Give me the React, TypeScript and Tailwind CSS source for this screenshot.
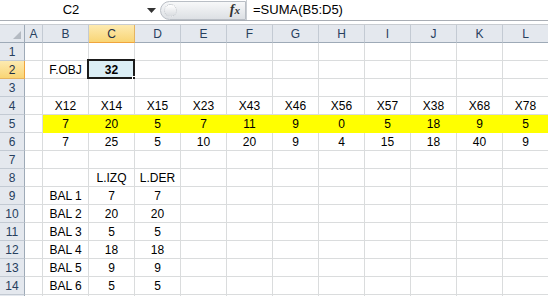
import React from 'react';

const COLS = ['A', 'B', 'C', 'D', 'E', 'F', 'G', 'H', 'I', 'J', 'K', 'L'];
const ROWS = Array.from({ length: 15 }, (_, i) => i + 1);

const vars = ['X12', 'X14', 'X15', 'X23', 'X43', 'X46', 'X56', 'X57', 'X38', 'X68', 'X78'];
const r5 = ['7', '20', '5', '7', '11', '9', '0', '5', '18', '9', '5'];
const r6 = ['7', '25', '5', '10', '20', '9', '4', '15', '18', '40', '9'];
const bal = ['7', '20', '5', '18', '9', '5'];

const CELLS: Record<string, string> = { B2: 'F.OBJ', C2: '32', C8: 'L.IZQ', D8: 'L.DER' };
vars.forEach((v, i) => {
  const c = COLS[i + 1];
  CELLS[`${c}4`] = v;
  CELLS[`${c}5`] = r5[i];
  CELLS[`${c}6`] = r6[i];
});
bal.forEach((v, i) => {
  CELLS[`B${i + 9}`] = `BAL ${i + 1}`;
  CELLS[`C${i + 9}`] = v;
  CELLS[`D${i + 9}`] = v;
});

function FormulaBar() {
  return (
    <div className="flex h-[21px] items-center border-b border-[#a9aeb5] bg-white">
      <div className="flex w-[158px] items-center">
        <div className="w-[142px] text-center text-[13px] text-black">C2</div>
        <svg width="9" height="5" viewBox="0 0 9 5" className="ml-[5px]">
          <path d="M0 0 H9 L4.5 5 Z" fill="#333" />
        </svg>
      </div>
      <div className="relative ml-[2px] flex h-[19px] w-[86px] items-center rounded-l-full border border-[#b9bec5] bg-gradient-to-b from-[#f7f8f9] to-[#dde0e4]">
        <div className="ml-[3px] h-[13px] w-[13px] rounded-full border border-dotted border-[#c2c6cb] bg-gradient-to-b from-[#ffffff] to-[#d9dce0]" />
        <span className="ml-auto mr-[5px] font-['Liberation_Serif'] text-[14px] font-bold italic leading-none text-[#333]">
          f<span className="text-[11px]">x</span>
        </span>
      </div>
      <div className="flex h-full flex-1 items-center border-l border-[#c9cdd2] pl-[6px] text-[13px] text-black">
        =SUMA(B5:D5)
      </div>
    </div>
  );
}

function ColHeader() {
  return (
    <div className="flex h-[18px]">
      <div className="relative w-[25px] shrink-0 border-b border-r border-[#9eaab7] bg-[#e4e8ee]">
        <svg width="8" height="8" viewBox="0 0 8 8" className="absolute bottom-[3px] right-[3px]">
          <path d="M8 0 V8 H0 Z" fill="#b4bac2" />
        </svg>
      </div>
      {COLS.map((c) => {
        const sel = c === 'C';
        return (
          <div
            key={c}
            className={`flex shrink-0 items-center justify-center border-b border-r text-[12px] ${
              c === 'A' ? 'w-[18px]' : 'w-[46px]'
            } ${
              sel
                ? 'border-b-[#f0a43c] border-r-[#e5b460] bg-gradient-to-b from-[#fdeab0] to-[#f9d574] text-[#1e2f44]'
                : 'border-b-[#9eaab7] border-r-[#c3cad3] bg-[#e4e8ee] text-[#27405e]'
            }`}
          >
            {c}
          </div>
        );
      })}
    </div>
  );
}

function Cell({ col, row }: { col: string; row: number }) {
  const key = `${col}${row}`;
  const v = CELLS[key];
  const yellow = row === 5 && col !== 'A';
  const active = key === 'C2';
  return (
    <div
      className={`relative flex h-[18px] shrink-0 items-center justify-center border-b border-r text-[12px] text-black ${
        col === 'A' ? 'w-[18px]' : 'w-[46px]'
      } ${yellow ? 'border-[#ffff00] bg-[#ffff00]' : active ? 'border-[#d8d8d8] bg-[#dbeef5]' : 'border-[#dadcdd] bg-white'}`}
    >
      <span className={active ? 'font-bold' : ''}>{v}</span>
      {active && (
        <>
          <div className="pointer-events-none absolute -left-[2px] -top-[2px] h-[20px] w-[48px] border-[2px] border-[#1b1b1b]" />
          <div className="absolute -bottom-[3px] -right-[3px] h-[5px] w-[5px] border border-white bg-[#1b1b1b]" />
        </>
      )}
    </div>
  );
}

export default function App() {
  return (
    <div className="h-[296px] w-[548px] overflow-hidden bg-white font-['Liberation_Sans',Arial,sans-serif]">
      <FormulaBar />
      <div className="h-[4px] border-b border-[#c8ccd1] bg-white" />
      <div className="w-[600px]">
        <ColHeader />
        {ROWS.map((r) => (
          <div key={r} className="flex">
            <div
              className={`flex h-[18px] w-[25px] shrink-0 items-center justify-center border-b border-r text-[12px] ${
                r === 2
                  ? 'border-b-[#e5b460] border-r-[#f0a43c] bg-gradient-to-b from-[#fdeab0] to-[#f9d574] text-[#1e2f44]'
                  : 'border-b-[#c3cad3] border-r-[#9eaab7] bg-[#e4e8ee] text-[#27405e]'
              }`}
            >
              {r < 15 ? r : ''}
            </div>
            {COLS.map((c) => (
              <Cell key={c} col={c} row={r} />
            ))}
          </div>
        ))}
      </div>
    </div>
  );
}
